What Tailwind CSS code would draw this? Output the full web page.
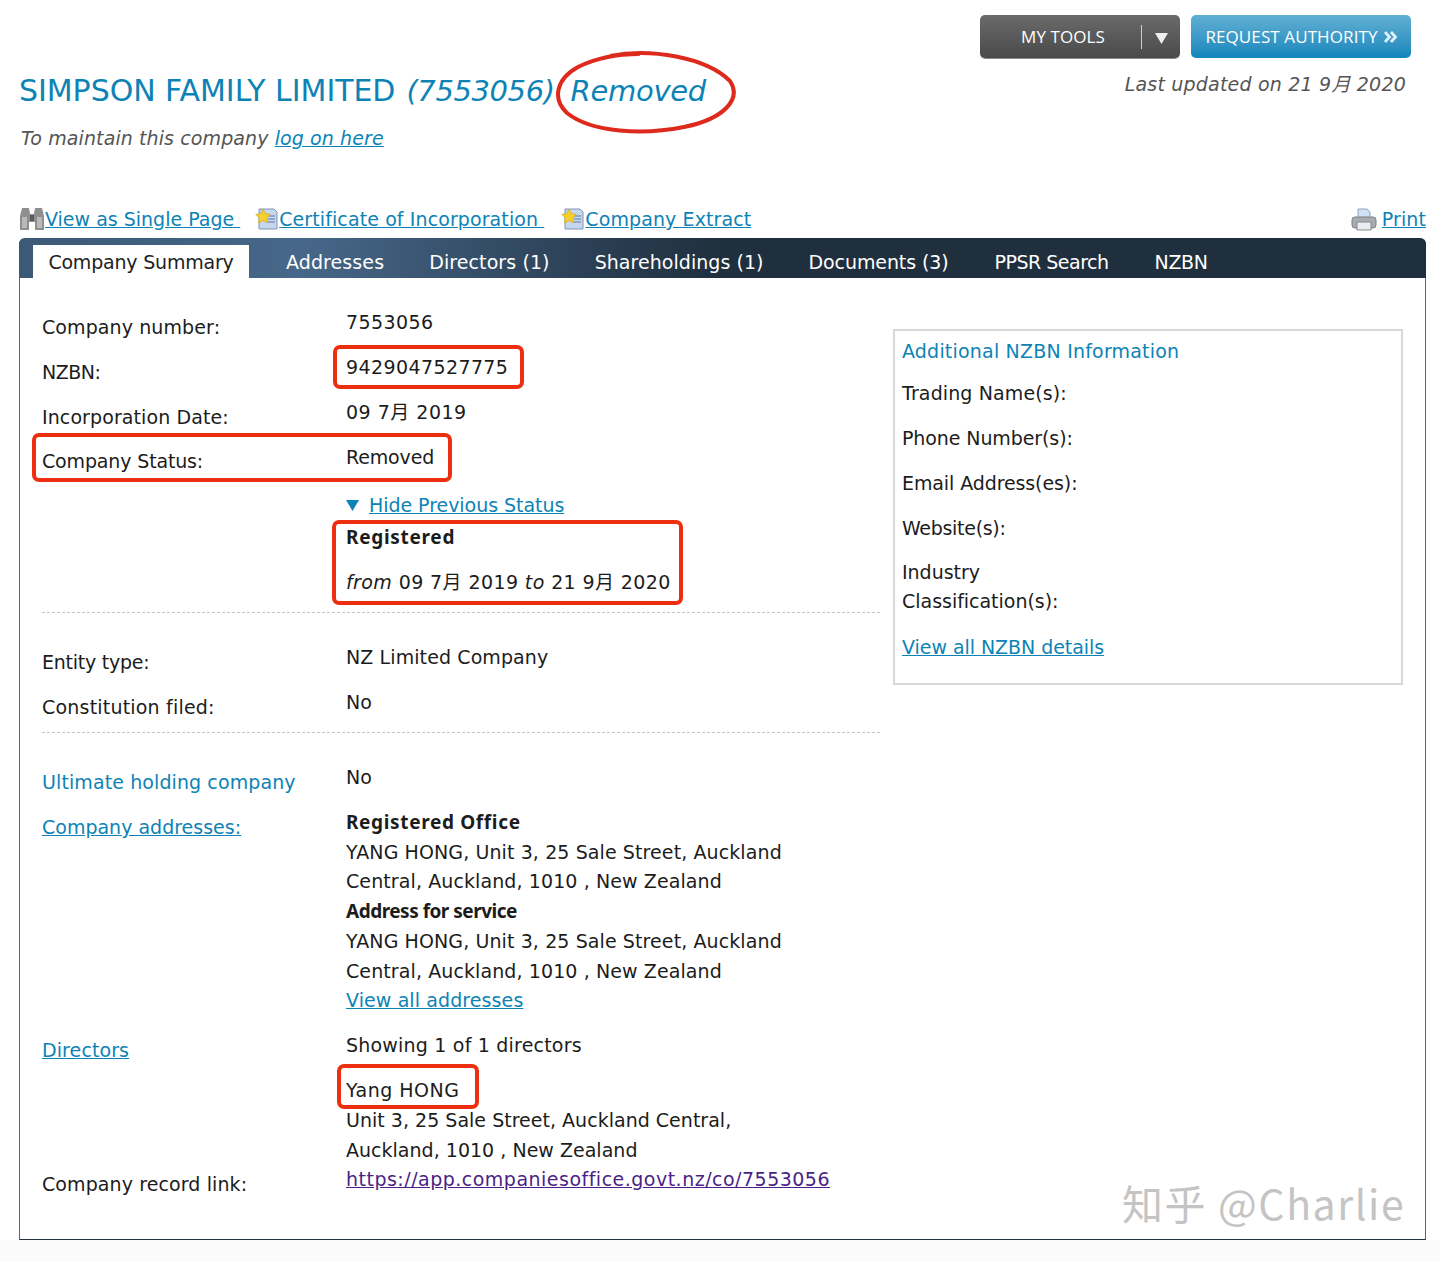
<!DOCTYPE html>
<html lang="en">
<head>
<meta charset="UTF-8">
<title>SIMPSON FAMILY LIMITED</title>
<script src="https://cdn.jsdelivr.net/npm/@tailwindcss/browser@4"></script>
</head>
<body class="relative h-[1262px] w-[1440px] overflow-hidden bg-white font-['DejaVu_Sans','Noto_Sans_CJK_JP',sans-serif] text-[19px] leading-[30px] tracking-[0.1px] text-[#1c1c1c]">

<!-- header -->
<div class="flex h-[205px] pl-[19px] pr-[29px]">
  <div class="flex-1 pt-[71px]">
    <h1 class="flex text-[30px] leading-[40px] tracking-[-0.05px] text-[#0d83b5]">
      <span>SIMPSON FAMILY LIMITED</span>
      <i class="ml-[11px] text-[29px] tracking-[-0.4px]">(7553056)</i>
      <i class="ml-[16px] text-[29px] tracking-[-0.3px]">Removed</i>
    </h1>
    <p class="mt-[12px] pl-[2px] italic text-[#555]">To maintain this company <a class="text-[#0d83b5] underline" href="#">log on here</a></p>
  </div>
  <div class="flex w-[431px] flex-col items-end pt-[15px]">
    <div class="flex gap-[11px]">
      <div class="flex h-[43px] w-[200px] items-center rounded-[5px] bg-linear-to-b from-[#6a6a6a] to-[#4a4a4a] text-[17px] text-white shadow-[0_1px_0_#8a8a8a]">
        <span class="w-[161px] pl-[41px] font-['Open_Sans']">MY TOOLS</span>
        <span class="h-[24px] w-px bg-white/70"></span>
        <svg class="ml-[13px] mt-[4px]" width="13" height="11" viewBox="0 0 13 11"><path d="M0 0h13L6.500 11z" fill="#eee"/></svg>
      </div>
      <div class="flex h-[43px] w-[220px] items-center justify-center gap-[6px] rounded-[5px] bg-linear-to-b from-[#5fb0d2] to-[#0f86bc] font-['Open_Sans'] text-[17px] text-white">
        REQUEST AUTHORITY
        <svg width="13" height="12" viewBox="0 0 13 12" fill="none" stroke="#dff1f9" stroke-width="2.800"><path d="M1 1l4.500 5L1 11M7 1l4.500 5L7 11"/></svg>
      </div>
    </div>
    <p class="mt-[11px] pr-[5px] italic tracking-[0.2px] text-[#555]">Last updated on 21 9月 2020</p>
  </div>
</div>

<!-- links above the box -->
<div class="box-border flex h-[33px] items-center pb-[5px] pl-[19px] pr-[14px] text-[#0d83b5]">
  <svg width="26" height="24" viewBox="0 0 26 24"><path d="M3 1h7l1 6h4l1-6h7l2 8v14h-9v-8h-6v8H1V9z" fill="#8f8f8f"/><path d="M3 10h5v11H3zM18 10h5v11h-5z" fill="#b9b9b9"/><path d="M11 8h4v6h-4z" fill="#5c5c5c"/></svg>
  <a class="tracking-[0] underline" href="#">View as Single Page&nbsp;</a>
  <span class="w-[14px]"></span>
  <svg width="25" height="24" viewBox="0 0 25 24"><path d="M5 2h15l3 3v17H5z" fill="#c6d6ec" stroke="#7f95ba"/><path d="M14 9h7M14 12h7M14 15h7" stroke="#5f78a5"/><path d="M9 2l2.300 4.700 5 .7-3.600 3.500.9 5L9 13.500l-4.600 2.400.9-5L1.700 7.400l5-.7z" fill="#f5cf2a" stroke="#d8a51c" stroke-width=".7"/></svg>
  <a class="underline" href="#">Certificate of Incorporation&nbsp;</a>
  <span class="w-[16px]"></span>
  <svg width="25" height="24" viewBox="0 0 25 24"><path d="M5 2h15l3 3v17H5z" fill="#c6d6ec" stroke="#7f95ba"/><path d="M14 9h7M14 12h7M14 15h7" stroke="#5f78a5"/><path d="M9 2l2.300 4.700 5 .7-3.600 3.500.9 5L9 13.500l-4.600 2.400.9-5L1.700 7.400l5-.7z" fill="#f5cf2a" stroke="#d8a51c" stroke-width=".7"/></svg>
  <a class="underline" href="#">Company Extract</a>
  <span class="flex-1"></span>
  <svg class="mr-[5px]" width="26" height="25" viewBox="0 0 26 25"><path d="M7 12V2h9l3 3v7z" fill="#cfe0f4" stroke="#8ea3bf"/><rect x="1" y="10" width="24" height="11" rx="3" fill="#a9adb2" stroke="#7b7f85"/><path d="M6 15h14v8H6z" fill="#e9edf2" stroke="#85898f"/></svg>
  <a class="underline" href="#">Print</a>
</div>

<!-- main box -->
<div class="ml-[19px] h-[1002px] w-[1407px] rounded-t-[6px] border border-t-0 border-[#24333f] border-x-[#5a6672]">
  <div class="-mx-px flex h-[40px] items-end rounded-t-[6px] bg-linear-to-r from-[#3c5976] via-[#47678a] via-20% to-[#1f2f3e] to-50% pl-[14px] text-white">
    <div class="flex h-[33px] w-[216px] items-center justify-center bg-white tracking-[-0.2px] text-[#222]">Company Summary</div>
    <div class="flex h-[33px] items-center">
      <span class="ml-[37px]">Addresses</span>
      <span class="ml-[45px]">Directors (1)</span>
      <span class="ml-[45px] tracking-[0.05px]">Shareholdings (1)</span>
      <span class="ml-[45px] tracking-[-0.1px]">Documents (3)</span>
      <span class="ml-[46px] tracking-[-0.5px]">PPSR Search</span>
      <span class="ml-[46px] tracking-[-0.4px]">NZBN</span>
    </div>
  </div>

  <div class="flex pl-[22px] pt-[29px]">
    <div class="w-[838px]">
      <div class="flex h-[45px]"><div class="w-[304px] pt-[5px]">Company number:</div><div class="tracking-[0.4px]">7553056</div></div>
      <div class="flex h-[45px]"><div class="w-[304px] pt-[5px] tracking-[-0.5px]">NZBN:</div><div class="tracking-[0.4px]">9429047527775</div></div>
      <div class="flex h-[45px]"><div class="w-[304px] pt-[5px]">Incorporation Date:</div><div class="tracking-[0.5px]">09 7月 2019</div></div>
      <div class="flex h-[48px]"><div class="w-[304px] pt-[4px] tracking-[-0.15px]">Company Status:</div><div class="tracking-[-0.15px]">Removed</div></div>
      <div class="ml-[304px]">
        <a class="flex items-center" href="#">
          <svg width="13" height="11" viewBox="0 0 13 11"><path d="M0 0h13L6.500 11z" fill="#0d83b5"/></svg>
          <span class="ml-[10px] tracking-[-0.05px] text-[#0d83b5] underline">Hide Previous Status</span>
        </a>
        <p class="mt-[2px] h-[45px] font-['Noto_Sans'] font-bold tracking-[0.7px]">Registered</p>
        <p class="tracking-[0.4px]"><i>from</i> 09 7月 2019 <i>to</i> 21 9月 2020</p>
      </div>
      <div class="mt-[15px] border-t border-dashed border-[#c4c4c4]"></div>

      <div class="mt-[29px] flex h-[45px]"><div class="w-[304px] pt-[5px] tracking-[-0.25px]">Entity type:</div><div>NZ Limited Company</div></div>
      <div class="flex h-[45px]"><div class="w-[304px] pt-[5px] tracking-[0.2px]">Constitution filed:</div><div>No</div></div>
      <div class="border-t border-dashed border-[#c4c4c4]"></div>

      <div class="mt-[29px] flex h-[45px]"><div class="w-[304px] pt-[5px] text-[#0d83b5]">Ultimate holding company</div><div>No</div></div>
      <div class="flex h-[223px]">
        <div class="w-[304px] pt-[5px]"><a class="tracking-[0] text-[#0d83b5] underline" href="#">Company addresses:</a></div>
        <div class="pt-px leading-[29.7px]">
          <p class="font-['Noto_Sans'] font-bold tracking-[0.65px]">Registered Office</p>
          <p>YANG HONG, Unit 3, 25 Sale Street, Auckland<br>Central, Auckland, 1010 , New Zealand</p>
          <p class="font-['Noto_Sans'] font-bold tracking-[-0.5px]">Address for service</p>
          <p>YANG HONG, Unit 3, 25 Sale Street, Auckland<br>Central, Auckland, 1010 , New Zealand</p>
          <a class="text-[#0d83b5] underline" href="#">View all addresses</a>
        </div>
      </div>
      <div class="flex h-[134px]">
        <div class="w-[304px] pt-[5px]"><a class="text-[#0d83b5] underline" href="#">Directors</a></div>
        <div>
          <p class="h-[45px] tracking-[0.2px]">Showing 1 of 1 directors</p>
          <p class="tracking-[0.5px]">Yang HONG</p>
          <p class="tracking-[0.02px]">Unit 3, 25 Sale Street, Auckland Central,<br>Auckland, 1010 , New Zealand</p>
        </div>
      </div>
      <div class="flex"><div class="w-[304px] pt-[5px]">Company record link:</div><a class="tracking-[0.49px] text-[#4b1f87] underline" href="#">https://app.companiesoffice.govt.nz/co/7553056</a></div>
    </div>

    <div class="ml-[13px] mt-[22px] h-[356px] w-[510px] border-2 border-[#d8d8d8] pl-[7px] pt-[5px] tracking-[-0.02px]">
      <p class="h-[42px] tracking-[0.2px] text-[#0d83b5]">Additional NZBN Information</p>
      <p class="h-[45px] tracking-[0.12px]">Trading Name(s):</p>
      <p class="h-[45px] tracking-[-0.1px]">Phone Number(s):</p>
      <p class="h-[45px] tracking-[-0.1px]">Email Address(es):</p>
      <p class="h-[45px] tracking-[-0.3px]">Website(s):</p>
      <p class="h-[74px] leading-[29px]">Industry<br>Classification(s):</p>
      <a class="tracking-[-0.05px] text-[#0d83b5] underline" href="#">View all NZBN details</a>
    </div>
  </div>
</div>
<div class="h-[23px] bg-[#fbfbfb]"></div>

<!-- hand-drawn annotations -->
<div class="absolute left-[333px] top-[345px] h-[44px] w-[191px] rounded-[7px] border-[4px] border-[#ee2f0f]"></div>
<div class="absolute left-[32px] top-[433px] h-[49px] w-[420px] rounded-[7px] border-[4px] border-[#ee2f0f]"></div>
<div class="absolute left-[332px] top-[520px] h-[85px] w-[351px] rounded-[7px] border-[4px] border-[#ee2f0f]"></div>
<div class="absolute left-[337px] top-[1064px] h-[45px] w-[142px] rounded-[7px] border-[4px] border-[#ee2f0f]"></div>
<svg class="absolute left-[550px] top-[45px]" width="190" height="95" viewBox="0 0 190 95" fill="none"><path d="M60 11C100 3 156 12 180 36c12 18-6 38-46 46-40 8-92 6-117-14C2 54 6 34 28 22c18-9 42-13 62-13" stroke="#dd2a1c" stroke-width="4"/></svg>
<div class="absolute left-[1122px] top-[1174px] font-['Noto_Sans_CJK_SC','Inter',sans-serif] text-[41px] leading-[56px] tracking-[1.6px] text-[#c4c4c4]">知乎 @Charlie</div>
</body>
</html>
